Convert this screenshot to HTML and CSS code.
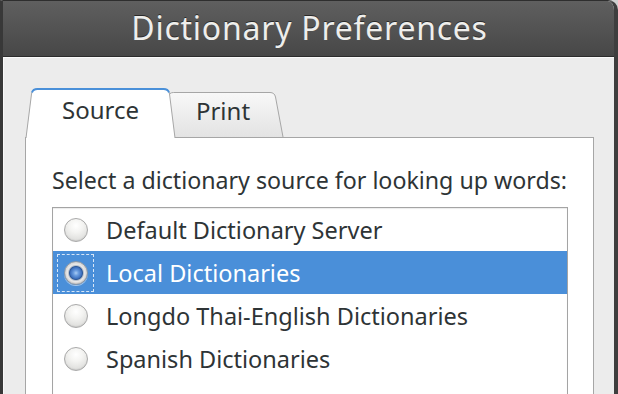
FILE: index.html
```html
<!DOCTYPE html>
<html lang="en">
<head>
<meta charset="utf-8">
<title>Dictionary Preferences</title>
<link rel="stylesheet" href="styles.css">
</head>
<body>
<div class="window">
  <div class="titlebar">
    <span class="title">Dictionary Preferences</span>
  </div>
  <div class="content">
    <div class="tabs">
      <div class="tab tab-source">
        <svg class="tab-shape" width="151" height="50" viewBox="0 0 151 50">
          <path d="M1,50 L6.5,6 Q7.3,1 12.5,1 L138.5,1 Q143.7,1 144.5,6 L150,50 Z" fill="#ffffff"/>
          <path d="M1,50 L6.5,6 Q7.3,1 12.5,1 L138.5,1 Q143.7,1 144.5,6 L150,50" fill="none" stroke="#a6a6a6" stroke-width="1"/>
          <path d="M7,4.5 Q8,1 12.5,1 L138.5,1 Q143,1 144,4.5" fill="none" stroke="#4a90d9" stroke-width="2"/>
        </svg>
        <span class="tab-label">Source</span>
      </div>
      <div class="tab tab-print">
        <svg class="tab-shape" width="122" height="45" viewBox="0 0 122 45">
          <defs>
            <linearGradient id="pg" x1="0" y1="0" x2="0" y2="1">
              <stop offset="0" stop-color="#f8f8f8"/>
              <stop offset="1" stop-color="#e3e3e3"/>
            </linearGradient>
          </defs>
          <path d="M0.5,45 L6,5 Q7,0.5 11.5,0.5 L108,0.5 Q112.5,0.5 113.5,5 L121,45 Z" fill="url(#pg)"/>
          <path d="M0.5,45 L6,5 Q7,0.5 11.5,0.5 L108,0.5 Q112.5,0.5 113.5,5 L121,45" fill="none" stroke="#a6a6a6" stroke-width="1"/>
        </svg>
        <span class="tab-label">Print</span>
      </div>
    </div>
    <div class="panel">
      <div class="prompt">Select a dictionary source for looking up words:</div>
      <div class="list">
        <div class="row">
          <span class="radio-wrap"><span class="radio"></span></span>
          <span class="row-label">Default Dictionary Server</span>
        </div>
        <div class="row row-selected">
          <span class="radio-wrap radio-focus"><span class="radio radio-on"></span></span>
          <span class="row-label">Local Dictionaries</span>
        </div>
        <div class="row">
          <span class="radio-wrap"><span class="radio"></span></span>
          <span class="row-label">Longdo Thai-English Dictionaries</span>
        </div>
        <div class="row">
          <span class="radio-wrap"><span class="radio"></span></span>
          <span class="row-label">Spanish Dictionaries</span>
        </div>
      </div>
    </div>
  </div>
</div>
</body>
</html>
```

FILE: styles.css
```css
html, body {
  margin: 0;
  padding: 0;
}

body {
  width: 618px;
  height: 394px;
  overflow: hidden;
  background: #cfcfcf;
  font-family: "Noto Sans", "Open Sans", "DejaVu Sans", sans-serif;
  color: #2e3436;
}

.window {
  width: 611px;
  height: 420px;
  border-left: 3px solid #383838;
  border-right: 4px solid #3e3e3e;
  border-top: 1px solid #2e2e2e;
  border-top-right-radius: 10px;
  background: #ececec;
  overflow: hidden;
}

.titlebar {
  height: 55px;
  background: linear-gradient(#5f5f5f, #474747);
  border-bottom: 1px solid #2c2c2c;
  box-shadow: 0 1px 0 #fafafa;
  display: flex;
  align-items: center;
  justify-content: center;
}

.title {
  font-size: 32px;
  line-height: 36px;
  color: #eeeeec;
  text-shadow: 0 -1px 0 #2a2a2a;
  letter-spacing: 0.75px;
  padding-left: 2px;
  margin-top: -1px;
}

.content {
  padding: 31px 20px 0 22px;
  box-shadow: inset 1px 0 0 #f8f8f8;
}

.tabs {
  display: flex;
  align-items: flex-end;
  height: 50px;
  margin-bottom: -1px;
  position: relative;
  z-index: 2;
}

.tab {
  position: relative;
  display: flex;
  justify-content: center;
  box-sizing: border-box;
}

.tab-shape {
  position: absolute;
  left: 0;
  top: 0;
  display: block;
}

.tab-label {
  position: relative;
  font-size: 24px;
  line-height: 28px;
}

.tab-source {
  width: 151px;
  height: 50px;
  padding-top: 8px;
  z-index: 2;
}

.tab-print {
  width: 122px;
  height: 45px;
  margin-left: -14px;
  margin-bottom: 1px;
  padding-top: 5px;
  z-index: 1;
}

.panel {
  position: relative;
  z-index: 1;
  width: 569px;
  height: 300px;
  background: #ffffff;
  border: 1px solid #a6a6a6;
  padding: 28px 0 0 26px;
  box-sizing: border-box;
}

.prompt {
  font-size: 23.2px;
  line-height: 28px;
  white-space: nowrap;
}

.list {
  margin-top: 13px;
  width: 516px;
  height: 240px;
  box-sizing: border-box;
  border: 1px solid #a4a4a4;
  box-shadow: inset 0 1px 1px rgba(0, 0, 0, 0.08);
  background: #ffffff;
}

.row {
  height: 43px;
  display: flex;
  align-items: center;
  font-size: 23.5px;
  line-height: 28px;
}

.row-selected {
  background: #4a8fd9;
  color: #ffffff;
}

.radio-wrap {
  width: 37px;
  height: 38px;
  margin-left: 4px;
  margin-right: 12px;
  box-sizing: border-box;
  display: flex;
  align-items: center;
  justify-content: center;
  border: 1px dashed transparent;
  flex: none;
}

.radio-focus {
  border-color: #d7e6f7;
}

.radio {
  width: 24px;
  height: 24px;
  box-sizing: border-box;
  border-radius: 50%;
  border: 1px solid #a9a9a9;
  background: radial-gradient(circle at 50% 30%, #ffffff 0, #f4f4f2 35%, #d4d4d2 100%);
  box-shadow: inset 0 -1px 1px rgba(0, 0, 0, 0.08), 0 1px 0 rgba(255, 255, 255, 0.5);
}

.radio-on {
  border-color: #8c98a6;
  background: radial-gradient(circle at 50% 50%, #a9ccf3 0, #6a9de0 2.5px, #3f72bf 5.5px, #2f5a99 6.5px, #b9c2cc 7.5px, #e8e8e8 8.5px, #d0d0d0 11.5px);
}

.row-label {
  white-space: nowrap;
}
```
